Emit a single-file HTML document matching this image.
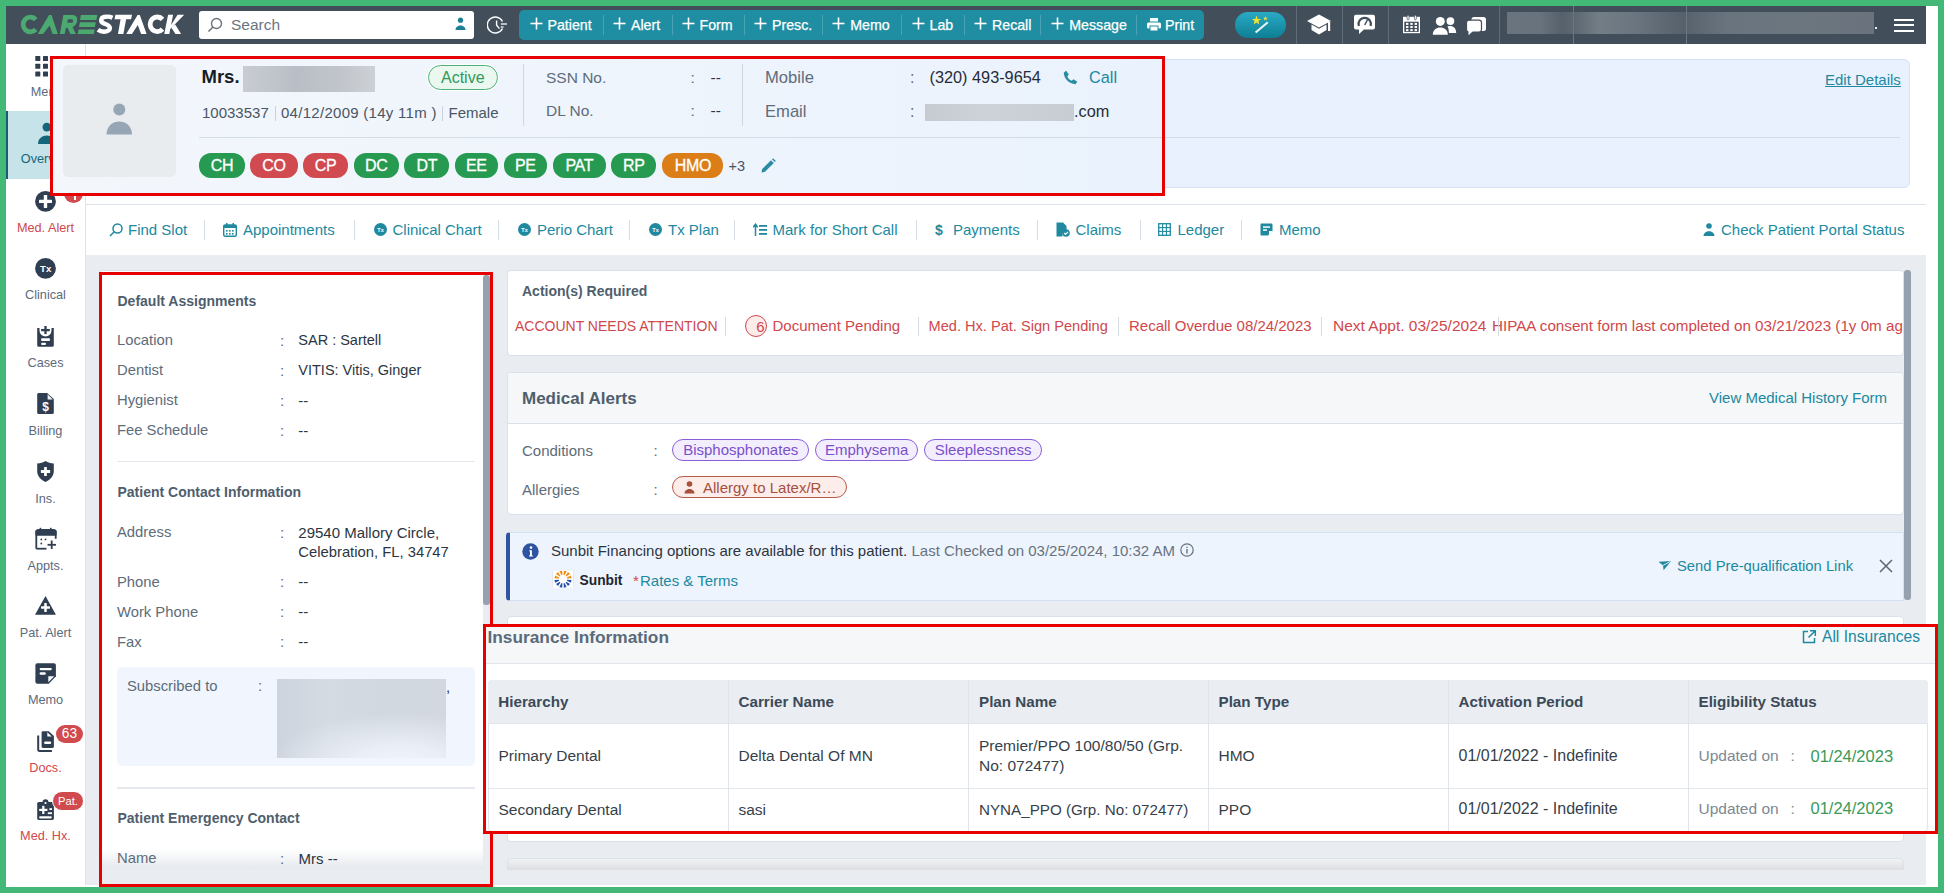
<!DOCTYPE html>
<html><head><meta charset="utf-8"><title>CareStack</title>
<style>
html,body{margin:0;padding:0;width:1944px;height:893px;overflow:hidden;background:#44b876}
body{position:relative;font-family:"Liberation Sans", sans-serif}
.a{position:absolute}
.t{position:absolute;line-height:1;white-space:nowrap}
svg{display:block}
</style></head><body>
<div class="a" style="left:6px;top:6px;width:1932px;height:881px;background:#fff"></div>
<div class="a" style="left:86px;top:255px;width:1840px;height:630px;background:#e9edf1"></div>
<div class="a" style="left:6px;top:6px;width:1920px;height:38px;background:#434e5b"></div>
<svg class="a" style="left:15px;top:10px;" width="175" height="28" viewBox="15 10 175 28">
<path d="M35.7,19.6 A7.2,7.3 0 1 0 35.7,29.4" fill="none" stroke="#4caa70" stroke-width="4.8"/>
<polygon fill="#4caa70" points="37.8,34 49,15 51.5,15 57.9,34 52.6,34 49.6,25.6 43,34"/>
<path fill="#4caa70" fill-rule="evenodd" d="M59.8,34 L63.4,15 L72.5,15 C76.5,15 77.8,18 77,21.5 C76.4,24.5 74.8,26.3 72.5,27 L75.8,34 L70.4,34 L67.5,27.8 L65.9,27.8 L64.6,34 Z M67.9,19.2 L67.2,22.8 L71.3,22.8 C72.6,22.8 73.1,21.8 73.1,20.9 C73.1,19.9 72.5,19.2 71.5,19.2 Z"/>
<polygon fill="#4caa70" points="80,19.9 80.9,15 97.3,15 96.4,19.9"/>
<polygon fill="#4caa70" points="79,26.9 79.9,22.2 95.8,22.2 94.9,26.9"/>
<polygon fill="#4caa70" points="77.7,34 78.6,29.4 94.6,29.4 93.7,34"/>
<path d="M112.5,17.8 C110,16.6 106,16.6 104,17 C100.8,17.8 100.3,21.5 103,23 C105.5,24.3 109.3,24.8 109.8,27.5 C110.3,30.5 107,31.7 104,31.7 C101.5,31.7 99.5,31 98,29.8" fill="none" stroke="#fff" stroke-width="4.4"/>
<polygon fill="#fff" points="114.5,19.2 115.4,14.7 132,14.7 131.1,19.2"/>
<polygon fill="#fff" points="120.6,19 126.2,19 123.4,33.9 118,33.9"/>
<polygon fill="#fff" points="126.2,33.9 137.6,15 139.8,15 146.6,33.9 141.1,33.9 137.8,25.1 131.9,33.9"/>
<path d="M162.5,19.4 A7.1,7.3 0 1 0 162.5,29.2" fill="none" stroke="#fff" stroke-width="4.8"/>
<polygon fill="#fff" points="164.3,33.9 168.1,14.7 173.1,14.7 169.3,33.9"/>
<polygon fill="#fff" points="169.5,27.5 177.6,14.7 184.2,14.7 175,24.2 170.5,28.8"/>
<polygon fill="#fff" points="171.2,27.5 175.2,24.5 181.1,33.9 175.5,33.9"/>
</svg>
<div class="a" style="left:199px;top:11px;width:275px;height:28px;background:#fff;border-radius:3px"></div>
<svg class="a" style="left:207px;top:17px;" width="16" height="16" viewBox="0 0 16 16"><circle cx="9.5" cy="6.5" r="5" fill="none" stroke="#6c757d" stroke-width="1.4"/><line x1="6" y1="10" x2="1.5" y2="14.5" stroke="#6c757d" stroke-width="1.6"/></svg>
<div class="t" style="left:231.0px;top:16.9px;font-size:15.5px;color:#6c757d;font-weight:400;">Search</div>
<svg class="a" style="left:455px;top:17px;" width="11" height="13" viewBox="0 0 11 13"><circle cx="5.5" cy="3.2" r="2.6" fill="#1e7f94"/><path d="M0.5,13 C0.5,7 10.5,7 10.5,13 Z" fill="#1e7f94"/></svg>
<svg class="a" style="left:486.5px;top:15px;" width="20" height="20" viewBox="0 0 20 20"><path d="M15.5,6.5 A8,8 0 1 0 15.5,13.5" fill="none" stroke="#fff" stroke-width="1.4"/><path d="M9.6,5.5 V10.3 L12.5,13.6" fill="none" stroke="#fff" stroke-width="1.4"/><line x1="13.8" y1="9" x2="20" y2="9" stroke="#fff" stroke-width="1.3"/><line x1="13.8" y1="12" x2="16.5" y2="12" stroke="#fff" stroke-width="1.3"/></svg>
<div class="a" style="left:519px;top:10px;width:685px;height:30px;background:#1f8ea2;border-radius:5px"></div>
<svg class="a" style="left:529px;top:17px;left:529.8px" width="13" height="13" viewBox="0 0 13 13"><line x1="6.5" y1="0.5" x2="6.5" y2="12.5" stroke="#fff" stroke-width="1.6"/><line x1="0.5" y1="6.5" x2="12.5" y2="6.5" stroke="#fff" stroke-width="1.6"/></svg>
<div class="t" style="left:547.5px;top:17.8px;font-size:14.2px;color:#fff;font-weight:400;-webkit-text-stroke:0.25px #fff">Patient</div>
<svg class="a" style="left:613px;top:17px;left:613.0px" width="13" height="13" viewBox="0 0 13 13"><line x1="6.5" y1="0.5" x2="6.5" y2="12.5" stroke="#fff" stroke-width="1.6"/><line x1="0.5" y1="6.5" x2="12.5" y2="6.5" stroke="#fff" stroke-width="1.6"/></svg>
<div class="t" style="left:631.0px;top:17.8px;font-size:14.2px;color:#fff;font-weight:400;-webkit-text-stroke:0.25px #fff">Alert</div>
<svg class="a" style="left:682px;top:17px;left:682.0px" width="13" height="13" viewBox="0 0 13 13"><line x1="6.5" y1="0.5" x2="6.5" y2="12.5" stroke="#fff" stroke-width="1.6"/><line x1="0.5" y1="6.5" x2="12.5" y2="6.5" stroke="#fff" stroke-width="1.6"/></svg>
<div class="t" style="left:699.5px;top:17.8px;font-size:14.2px;color:#fff;font-weight:400;-webkit-text-stroke:0.25px #fff">Form</div>
<svg class="a" style="left:754px;top:17px;left:754.0px" width="13" height="13" viewBox="0 0 13 13"><line x1="6.5" y1="0.5" x2="6.5" y2="12.5" stroke="#fff" stroke-width="1.6"/><line x1="0.5" y1="6.5" x2="12.5" y2="6.5" stroke="#fff" stroke-width="1.6"/></svg>
<div class="t" style="left:772.0px;top:17.8px;font-size:14.2px;color:#fff;font-weight:400;-webkit-text-stroke:0.25px #fff">Presc.</div>
<svg class="a" style="left:832px;top:17px;left:832.0px" width="13" height="13" viewBox="0 0 13 13"><line x1="6.5" y1="0.5" x2="6.5" y2="12.5" stroke="#fff" stroke-width="1.6"/><line x1="0.5" y1="6.5" x2="12.5" y2="6.5" stroke="#fff" stroke-width="1.6"/></svg>
<div class="t" style="left:850.3px;top:17.8px;font-size:14.2px;color:#fff;font-weight:400;-webkit-text-stroke:0.25px #fff">Memo</div>
<svg class="a" style="left:911px;top:17px;left:911.5px" width="13" height="13" viewBox="0 0 13 13"><line x1="6.5" y1="0.5" x2="6.5" y2="12.5" stroke="#fff" stroke-width="1.6"/><line x1="0.5" y1="6.5" x2="12.5" y2="6.5" stroke="#fff" stroke-width="1.6"/></svg>
<div class="t" style="left:929.5px;top:17.8px;font-size:14.2px;color:#fff;font-weight:400;-webkit-text-stroke:0.25px #fff">Lab</div>
<svg class="a" style="left:974px;top:17px;left:974.0px" width="13" height="13" viewBox="0 0 13 13"><line x1="6.5" y1="0.5" x2="6.5" y2="12.5" stroke="#fff" stroke-width="1.6"/><line x1="0.5" y1="6.5" x2="12.5" y2="6.5" stroke="#fff" stroke-width="1.6"/></svg>
<div class="t" style="left:992.0px;top:17.8px;font-size:14.2px;color:#fff;font-weight:400;-webkit-text-stroke:0.25px #fff">Recall</div>
<svg class="a" style="left:1051px;top:17px;left:1051.3px" width="13" height="13" viewBox="0 0 13 13"><line x1="6.5" y1="0.5" x2="6.5" y2="12.5" stroke="#fff" stroke-width="1.6"/><line x1="0.5" y1="6.5" x2="12.5" y2="6.5" stroke="#fff" stroke-width="1.6"/></svg>
<div class="t" style="left:1069.3px;top:17.8px;font-size:14.2px;color:#fff;font-weight:400;-webkit-text-stroke:0.25px #fff">Message</div>
<div class="a" style="left:602.7px;top:15px;width:1px;height:20px;background:#4aa3b4"></div>
<div class="a" style="left:671.6px;top:15px;width:1px;height:20px;background:#4aa3b4"></div>
<div class="a" style="left:743.7px;top:15px;width:1px;height:20px;background:#4aa3b4"></div>
<div class="a" style="left:822.0px;top:15px;width:1px;height:20px;background:#4aa3b4"></div>
<div class="a" style="left:900.7px;top:15px;width:1px;height:20px;background:#4aa3b4"></div>
<div class="a" style="left:963.5px;top:15px;width:1px;height:20px;background:#4aa3b4"></div>
<div class="a" style="left:1040.2px;top:15px;width:1px;height:20px;background:#4aa3b4"></div>
<div class="a" style="left:1136.4px;top:15px;width:1px;height:20px;background:#4aa3b4"></div>
<svg class="a" style="left:1146.5px;top:18px;" width="14" height="13" viewBox="0 0 14 13"><rect x="3" y="0" width="8" height="3.5" fill="#fff"/><rect x="0" y="4.5" width="14" height="6" rx="1.5" fill="#fff"/><rect x="3" y="8" width="8" height="5" fill="#fff" stroke="#1f8ea2" stroke-width="1"/></svg>
<div class="t" style="left:1165.0px;top:17.8px;font-size:14.2px;color:#fff;font-weight:400;-webkit-text-stroke:0.25px #fff">Print</div>
<div class="a" style="left:1235px;top:12px;width:51px;height:25.6px;border-radius:13px;background:linear-gradient(#2aaac4,#0d7f95)"></div>
<svg class="a" style="left:1252px;top:14px;" width="20" height="20" viewBox="0 0 20 20"><polygon fill="#f6e22c" points="4.5,1.5 5.7,4.9 9.2,4.9 6.4,7 7.4,10.5 4.5,8.4 1.6,10.5 2.6,7 -0.2,4.9 3.3,4.9"/><polygon fill="#f6e22c" points="13.4,2 14,3.7 15.8,3.7 14.4,4.8 14.9,6.5 13.4,5.5 11.9,6.5 12.4,4.8 11,3.7 12.8,3.7"/><line x1="3.6" y1="18.6" x2="15.8" y2="8.2" stroke="#e8f4f6" stroke-width="2"/></svg>
<div class="a" style="left:1296.0px;top:6px;width:1px;height:38px;background:#5f6c79"></div>
<div class="a" style="left:1342.0px;top:6px;width:1px;height:38px;background:#5f6c79"></div>
<div class="a" style="left:1388.0px;top:6px;width:1px;height:38px;background:#5f6c79"></div>
<div class="a" style="left:1499.0px;top:6px;width:1px;height:38px;background:#5f6c79"></div>
<svg class="a" style="left:1307px;top:14px;" width="25" height="21" viewBox="0 0 25 21"><polygon fill="#fff" points="12,0.5 24,7 12,13.5 0,7"/><path d="M4.5,10.5 V16 L12,20.5 L19.5,16 V10.5 L12,14.8 Z" fill="#fff"/><rect x="21" y="8" width="2.2" height="9" fill="#fff"/></svg>
<svg class="a" style="left:1354px;top:14px;" width="22" height="21" viewBox="0 0 22 21"><path d="M2,0.7 H19 a2,2 0 0 1 2,2 V13.5 a2,2 0 0 1 -2,2 H10 L5,20 V15.5 H2 a2,2 0 0 1 -2,-2 V2.7 a2,2 0 0 1 2,-2 Z" fill="#fff"/><path d="M4.8,12 A6.2,6.2 0 1 1 16.6,12" fill="none" stroke="#434e5b" stroke-width="2.2"/><line x1="10.7" y1="11" x2="13.6" y2="5.5" stroke="#434e5b" stroke-width="1.5"/></svg>
<svg class="a" style="left:1403px;top:15px;" width="17" height="19" viewBox="0 0 17 19"><rect x="0" y="1.8" width="17" height="16.4" fill="#fff"/><rect x="1.3" y="6.7" width="14.4" height="10.2" fill="#434e5b"/><rect x="4.1" y="0.2" width="1.9" height="4.6" rx="0.9" fill="#fff" stroke="#434e5b" stroke-width="0.7"/><rect x="11.4" y="0.2" width="1.9" height="4.6" rx="0.9" fill="#fff" stroke="#434e5b" stroke-width="0.7"/><rect x="3.0" y="7.9" width="2.4" height="2" fill="#fff"/><rect x="3.0" y="11.0" width="2.4" height="2" fill="#fff"/><rect x="3.0" y="14.1" width="2.4" height="2" fill="#fff"/><rect x="7.3" y="7.9" width="2.4" height="2" fill="#fff"/><rect x="7.3" y="11.0" width="2.4" height="2" fill="#fff"/><rect x="7.3" y="14.1" width="2.4" height="2" fill="#fff"/><rect x="11.6" y="7.9" width="2.4" height="2" fill="#fff"/><rect x="11.6" y="11.0" width="2.4" height="2" fill="#fff"/><rect x="11.6" y="14.1" width="2.4" height="2" fill="#fff"/></svg>
<svg class="a" style="left:1432px;top:15px;" width="25" height="21" viewBox="0 0 25 21"><circle cx="8.3" cy="6.4" r="4.5" fill="#fff"/><path d="M0.8,19.7 C0.8,10 15.8,10 15.8,19.7 Z" fill="#fff"/><circle cx="18.4" cy="6.1" r="3.9" fill="#fff"/><path d="M15.5,11.5 C20,10 24.2,12.5 24.2,17.9 H17 C16.8,15 16.5,13 15.5,11.5 Z" fill="#fff"/></svg>
<svg class="a" style="left:1466px;top:16px;" width="21" height="20" viewBox="0 0 21 20"><rect x="5.5" y="1" width="14.5" height="14" rx="2.5" fill="#fff"/><rect x="0.5" y="4.2" width="15" height="11.8" rx="2.5" fill="#fff" stroke="#434e5b" stroke-width="1.2"/><path d="M2.5,15 L2.5,19.2 L7,15 Z" fill="#fff"/></svg>
<div class="a" style="left:1507px;top:12px;width:367px;height:22px;background:linear-gradient(90deg,#6a747e 0%,#69737d 9%,#56616b 15%,#5e6973 19%,#737d86 25%,#6b757f 35%,#5f6a74 42%,#56616b 48%,#5e6973 53%,#6a747e 60%,#6c767f 80%,#6a737d 100%)"></div>
<div class="a" style="left:1875px;top:27px;width:2px;height:2px;background:#e8eef3"></div>
<div class="a" style="left:1573px;top:6px;width:1px;height:38px;background:#6a7783"></div>
<div class="a" style="left:1686px;top:6px;width:1px;height:38px;background:#6a7783"></div>
<div class="a" style="left:1894px;top:18.5px;width:20px;height:2.6px;background:#fff"></div>
<div class="a" style="left:1894px;top:23.5px;width:20px;height:2.6px;background:#fff"></div>
<div class="a" style="left:1894px;top:29.5px;width:20px;height:2.6px;background:#fff"></div>
<div class="a" style="left:85px;top:44px;width:1px;height:841px;background:#dfe4ea"></div>
<div class="a" style="left:6px;top:111px;width:79px;height:68px;background:#c5e3e9"></div>
<div class="a" style="left:6px;top:111px;width:2px;height:68px;background:#145e73"></div>
<svg class="a" style="left:35px;top:55px;" width="22" height="23" viewBox="0 0 22 23"><rect x="0.3" y="1.0" width="5" height="5.1" rx="0.6" fill="#2f3e50"/><rect x="0.3" y="8.7" width="5" height="5.1" rx="0.6" fill="#2f3e50"/><rect x="0.3" y="16.4" width="5" height="5.1" rx="0.6" fill="#2f3e50"/><rect x="8.0" y="1.0" width="5" height="5.1" rx="0.6" fill="#2f3e50"/><rect x="8.0" y="8.7" width="5" height="5.1" rx="0.6" fill="#2f3e50"/><rect x="8.0" y="16.4" width="5" height="5.1" rx="0.6" fill="#2f3e50"/><rect x="15.7" y="1.0" width="5" height="5.1" rx="0.6" fill="#2f3e50"/><rect x="15.7" y="8.7" width="5" height="5.1" rx="0.6" fill="#2f3e50"/><rect x="15.7" y="16.4" width="5" height="5.1" rx="0.6" fill="#2f3e50"/></svg>
<div class="t" style="left:30.8px;top:86.0px;font-size:12.7px;color:#5b6b7d;font-weight:400;">Menu</div>
<svg class="a" style="left:37px;top:122px;" width="20" height="23" viewBox="0 0 20 23"><circle cx="9.8" cy="5.1" r="4.3" fill="#15667b"/><path d="M1,22 C1,10.5 18.6,10.5 18.6,22 Z" fill="#15667b"/></svg>
<div class="t" style="left:20.8px;top:153.2px;font-size:12.7px;color:#15667b;font-weight:400;">Overview</div>
<div class="a" style="left:64px;top:184px;width:19px;height:19px;border-radius:10px;background:#d04a4e"></div>
<div class="a" style="left:74px;top:196px;width:2px;height:3.5px;background:#fff"></div>
<svg class="a" style="left:35px;top:191px;" width="21" height="21" viewBox="0 0 21 21"><circle cx="10.5" cy="10.4" r="10.4" fill="#2f3e50"/><rect x="8.8" y="3.9" width="3.4" height="13" rx="0.6" fill="#fff"/><rect x="4" y="8.7" width="13" height="3.4" rx="0.6" fill="#fff"/></svg>
<div class="t" style="left:6px;width:79px;text-align:center;top:222.0px;font-size:12.7px;color:#d0474c">Med. Alert</div>
<svg class="a" style="left:35px;top:258px;" width="21" height="21" viewBox="0 0 21 21"><circle cx="10.5" cy="10.4" r="10.4" fill="#2f3e50"/><text x="10.7" y="13.7" font-family="Liberation Sans" font-weight="700" font-size="9.6" fill="#fff" text-anchor="middle">Tx</text></svg>
<div class="t" style="left:6px;width:79px;text-align:center;top:289.0px;font-size:12.7px;color:#5b6b7d">Clinical</div>
<svg class="a" style="left:37px;top:325px;" width="17" height="22" viewBox="0 0 17 22"><path d="M0.2,2.9 H2.5 V5.5 A6,6 0 0 0 14.5,5.5 V2.9 H16.8 V20.2 Q16.8,21.7 15.3,21.7 H1.7 Q0.2,21.7 0.2,20.2 Z" fill="#2f3e50"/><rect x="7.35" y="1" width="2.3" height="8.1" fill="#2f3e50"/><rect x="4.1" y="3.95" width="8.7" height="2.3" fill="#2f3e50"/><rect x="4.1" y="13.3" width="8.9" height="2.7" rx="1" fill="#fff"/><rect x="4.1" y="17.8" width="4.9" height="2.2" rx="1" fill="#fff"/></svg>
<div class="t" style="left:6px;width:79px;text-align:center;top:357.0px;font-size:12.7px;color:#5b6b7d">Cases</div>
<svg class="a" style="left:37px;top:392px;" width="17" height="23" viewBox="0 0 17 23"><path d="M1.5,1 H10.1 L16.8,7.1 V20.4 Q16.8,21.9 15.3,21.9 H1.7 Q0.2,21.9 0.2,20.4 V2.5 Q0.2,1 1.5,1 Z" fill="#2f3e50"/><path d="M10.6,2.3 V7.4 H15.8 Z" fill="#eef0f3"/><text x="8.6" y="18.6" font-family="Liberation Sans" font-weight="700" font-size="12" fill="#fff" text-anchor="middle">$</text></svg>
<div class="t" style="left:6px;width:79px;text-align:center;top:425.0px;font-size:12.7px;color:#5b6b7d">Billing</div>
<svg class="a" style="left:37px;top:460px;" width="17" height="23" viewBox="0 0 17 23"><path d="M8.5,1 C11,2.6 13.5,3.2 16.8,3.6 V11 C16.8,16 13.5,19.8 8.5,21.9 C3.5,19.8 0.2,16 0.2,11 V3.6 C3.5,3.2 6,2.6 8.5,1 Z" fill="#2f3e50"/><rect x="7.1" y="6.9" width="2.8" height="9.2" rx="0.5" fill="#fff"/><rect x="3.9" y="10.1" width="9.2" height="2.8" rx="0.5" fill="#fff"/></svg>
<div class="t" style="left:6px;width:79px;text-align:center;top:492.5px;font-size:12.7px;color:#5b6b7d">Ins.</div>
<svg class="a" style="left:35px;top:527px;" width="22" height="23" viewBox="0 0 22 23"><path d="M1.3,21.7 V5.2 Q1.3,3 3.5,3 H18.5 Q20.7,3 20.7,5.2 V11.8" fill="none" stroke="#2f3e50" stroke-width="1.8"/><path d="M1.3,21.7 H11.5" fill="none" stroke="#2f3e50" stroke-width="1.8"/><rect x="0.4" y="3" width="21.2" height="5.8" rx="1.5" fill="#2f3e50"/><rect x="4.6" y="0.8" width="1.6" height="3" fill="#2f3e50"/><rect x="15" y="0.8" width="1.6" height="3" fill="#2f3e50"/><circle cx="6.3" cy="12.4" r="0.9" fill="#2f3e50"/><circle cx="10.5" cy="12.4" r="0.9" fill="#2f3e50"/><circle cx="6.3" cy="16.5" r="0.9" fill="#2f3e50"/><rect x="15.8" y="13.5" width="1.8" height="8.5" fill="#2f3e50"/><rect x="12.5" y="16.9" width="8.5" height="1.8" fill="#2f3e50"/></svg>
<div class="t" style="left:6px;width:79px;text-align:center;top:560.0px;font-size:12.7px;color:#5b6b7d">Appts.</div>
<svg class="a" style="left:35px;top:595px;" width="21" height="21" viewBox="0 0 21 21"><path d="M10.5,1 L20.9,19.7 H0 Z" fill="#2f3e50"/><rect x="9.25" y="8" width="2.5" height="9" rx="0.4" fill="#fff"/><rect x="6" y="11.25" width="9" height="2.5" rx="0.4" fill="#fff"/></svg>
<div class="t" style="left:6px;width:79px;text-align:center;top:627.0px;font-size:12.7px;color:#5b6b7d">Pat. Alert</div>
<svg class="a" style="left:35px;top:662px;" width="21" height="22" viewBox="0 0 21 22"><path d="M2.4,1.2 H18.9 Q20.9,1.2 20.9,3.2 V14.3 L13.8,21.7 H2.4 Q0.4,21.7 0.4,19.7 V3.2 Q0.4,1.2 2.4,1.2 Z" fill="#2f3e50"/><rect x="4.6" y="5.9" width="12.2" height="2.3" rx="1.1" fill="#fff"/><rect x="4.6" y="10.3" width="6.2" height="2.5" rx="1.2" fill="#fff"/><path d="M13.3,14.2 H19.2 L13.3,20.3 Z" fill="#fff"/></svg>
<div class="t" style="left:6px;width:79px;text-align:center;top:694.0px;font-size:12.7px;color:#5b6b7d">Memo</div>
<svg class="a" style="left:36px;top:729px;" width="19" height="24" viewBox="0 0 19 24"><path d="M2.2,6.5 V20.5 Q2.2,22 3.7,22 H15.9" fill="none" stroke="#2f3e50" stroke-width="2"/><path d="M6.9,2.2 H12.8 L17.9,7.1 V17.5 Q17.9,18.9 16.5,18.9 H6.9 Q5.6,18.9 5.6,17.5 V3.5 Q5.6,2.2 6.9,2.2 Z" fill="#2f3e50"/><path d="M11.3,3.3 V7.5 H15.8 Z" fill="#fff"/><rect x="8.1" y="12.4" width="7.1" height="2.5" rx="1.2" fill="#fff"/></svg>
<div class="a" style="left:56px;top:725px;width:27px;height:18px;border-radius:9px;background:#d04a4e;color:#fff;font-size:13.8px;line-height:18.5px;text-align:center">63</div>
<div class="t" style="left:6px;width:79px;text-align:center;top:762.0px;font-size:12.7px;color:#d0474c">Docs.</div>
<svg class="a" style="left:37px;top:798px;" width="17" height="23" viewBox="0 0 17 23"><rect x="0.2" y="3.9" width="16.7" height="18" rx="1.6" fill="#2f3e50"/><circle cx="8.5" cy="4.3" r="3" fill="#2f3e50"/><circle cx="8.5" cy="5" r="1.1" fill="#fff"/><rect x="5.2" y="7.8" width="2.2" height="8.2" fill="#fff"/><rect x="2.2" y="10.8" width="8.2" height="2.2" fill="#fff"/><rect x="12.4" y="10.2" width="2.6" height="1.8" fill="#fff"/><rect x="10.8" y="14.3" width="4.2" height="1.8" fill="#fff"/><rect x="2.2" y="18.2" width="12.5" height="2.4" rx="0.8" fill="#fff"/></svg>
<div class="a" style="left:52px;top:791px;width:32px;height:20px;border-radius:10px;background:#d04a4e;border:1.2px solid #fff;box-sizing:border-box;color:#fff;font-size:11.2px;line-height:18px;text-align:center">Pat.</div>
<div class="t" style="left:6px;width:79px;text-align:center;top:829.5px;font-size:12.7px;color:#d0474c">Med. Hx.</div>
<div class="a" style="left:86px;top:204px;width:1840px;height:1px;background:#dde3ea"></div>
<div class="a" style="left:100px;top:59px;width:1810px;height:129px;background:#e8f1fd;border:1px solid #d3e2f5;border-radius:6px;box-sizing:border-box"></div>
<div class="a" style="left:1165px;top:137px;width:735px;height:1px;background:#d3dbe5"></div>
<div class="t" style="left:1825.0px;top:72.3px;font-size:15px;color:#2089a0;font-weight:400;text-decoration:underline">Edit Details</div>
<div class="a" style="left:53px;top:59px;width:1109px;height:134px;background:linear-gradient(90deg,#f3f7fc,#eef4fc 60%,#eaf2fd)"></div>
<div class="a" style="left:63px;top:65px;width:113px;height:112px;background:#e9ecef;border-radius:5px"></div>
<svg class="a" style="left:106px;top:103px;" width="27" height="32" viewBox="0 0 27 32"><circle cx="13.3" cy="6.5" r="6" fill="#97a6b4"/><path d="M0.5,31.5 C0.5,14 26,14 26,31.5 Z" fill="#97a6b4"/></svg>
<div class="t" style="left:201.5px;top:68.3px;font-size:18.5px;color:#161c26;font-weight:700;">Mrs.</div>
<div class="a" style="left:243px;top:65.5px;width:132px;height:26px;background:linear-gradient(90deg,#c9ccd2,#b9bec6 40%,#c0c4ca 70%,#cdd1d6)"></div>
<div class="a" style="left:427.5px;top:65px;width:70.5px;height:25px;box-sizing:border-box;border:1.7px solid #4fb077;border-radius:12.5px;background:#eaf8ef;box-shadow:0 0 0 1px #fff"></div>
<div class="t" style="left:441.0px;top:69.5px;font-size:16px;color:#2f9a5c;font-weight:400;">Active</div>
<div class="t" style="left:202.0px;top:105.2px;font-size:15px;color:#4a5563;font-weight:400;">10033537</div>
<div class="a" style="left:275px;top:106px;width:1px;height:15px;background:#c9d1da"></div>
<div class="t" style="left:281.0px;top:105.2px;font-size:15px;color:#4a5563;font-weight:400;letter-spacing:0.28px">04/12/2009 (14y 11m )</div>
<div class="a" style="left:442px;top:106px;width:1px;height:15px;background:#c9d1da"></div>
<div class="t" style="left:448.5px;top:105.2px;font-size:15px;color:#4a5563;font-weight:400;">Female</div>
<div class="a" style="left:523px;top:64px;width:1px;height:62px;background:#cfd8e2"></div>
<div class="a" style="left:742px;top:64px;width:1px;height:62px;background:#cfd8e2"></div>
<div class="a" style="left:199px;top:137px;width:963px;height:1px;background:#d3dbe5"></div>
<div class="t" style="left:546.0px;top:69.9px;font-size:15.5px;color:#5e6c7a;font-weight:400;">SSN No.</div>
<div class="t" style="left:690.5px;top:69.9px;font-size:15.5px;color:#5e6c7a;font-weight:400;">:</div>
<div class="t" style="left:710.5px;top:69.9px;font-size:15.5px;color:#2c3540;font-weight:400;">--</div>
<div class="t" style="left:546.0px;top:103.4px;font-size:15.5px;color:#5e6c7a;font-weight:400;">DL No.</div>
<div class="t" style="left:690.5px;top:103.4px;font-size:15.5px;color:#5e6c7a;font-weight:400;">:</div>
<div class="t" style="left:710.5px;top:103.4px;font-size:15.5px;color:#2c3540;font-weight:400;">--</div>
<div class="t" style="left:765.0px;top:69.7px;font-size:16.6px;color:#5e6c7a;font-weight:400;">Mobile</div>
<div class="t" style="left:910.0px;top:70.3px;font-size:16px;color:#5e6c7a;font-weight:400;">:</div>
<div class="t" style="left:929.5px;top:69.2px;font-size:16.3px;color:#262d38;font-weight:400;">(320) 493-9654</div>
<svg class="a" style="left:1063px;top:70px;" width="15" height="15" viewBox="0 0 15 15"><path d="M3.2,0.8 L5.8,4.6 L4.3,6.4 C5.3,8.6 6.6,9.8 8.7,10.8 L10.5,9.2 L14.3,11.8 L12.5,14.2 C6,14 0.9,8.8 0.8,2.6 Z" fill="#2a8ba1"/></svg>
<div class="t" style="left:1089.0px;top:69.2px;font-size:16.3px;color:#2089a0;font-weight:400;">Call</div>
<div class="t" style="left:765.0px;top:103.5px;font-size:16.6px;color:#5e6c7a;font-weight:400;">Email</div>
<div class="t" style="left:910.0px;top:104.1px;font-size:16px;color:#5e6c7a;font-weight:400;">:</div>
<div class="a" style="left:925px;top:104px;width:149px;height:17px;background:linear-gradient(90deg,#c6cbd2,#cdd2d8 40%,#c8cdd4)"></div>
<div class="t" style="left:1074.0px;top:103.2px;font-size:16.3px;color:#262d38;font-weight:400;">.com</div>
<div class="a" style="left:199.0px;top:153px;width:46.0px;height:24.5px;border-radius:12px;background:#279a52;color:#fff;font-size:16px;line-height:25.4px;letter-spacing:-0.3px;-webkit-text-stroke:0.3px #fff;text-align:center">CH</div>
<div class="a" style="left:250.4px;top:153px;width:47.3px;height:24.5px;border-radius:12px;background:#d04a4f;color:#fff;font-size:16px;line-height:25.4px;letter-spacing:-0.3px;-webkit-text-stroke:0.3px #fff;text-align:center">CO</div>
<div class="a" style="left:303.0px;top:153px;width:45.0px;height:24.5px;border-radius:12px;background:#d04a4f;color:#fff;font-size:16px;line-height:25.4px;letter-spacing:-0.3px;-webkit-text-stroke:0.3px #fff;text-align:center">CP</div>
<div class="a" style="left:353.8px;top:153px;width:45.0px;height:24.5px;border-radius:12px;background:#279a52;color:#fff;font-size:16px;line-height:25.4px;letter-spacing:-0.3px;-webkit-text-stroke:0.3px #fff;text-align:center">DC</div>
<div class="a" style="left:404.4px;top:153px;width:45.1px;height:24.5px;border-radius:12px;background:#279a52;color:#fff;font-size:16px;line-height:25.4px;letter-spacing:-0.3px;-webkit-text-stroke:0.3px #fff;text-align:center">DT</div>
<div class="a" style="left:454.9px;top:153px;width:42.9px;height:24.5px;border-radius:12px;background:#279a52;color:#fff;font-size:16px;line-height:25.4px;letter-spacing:-0.3px;-webkit-text-stroke:0.3px #fff;text-align:center">EE</div>
<div class="a" style="left:503.7px;top:153px;width:43.3px;height:24.5px;border-radius:12px;background:#279a52;color:#fff;font-size:16px;line-height:25.4px;letter-spacing:-0.3px;-webkit-text-stroke:0.3px #fff;text-align:center">PE</div>
<div class="a" style="left:553.0px;top:153px;width:52.7px;height:24.5px;border-radius:12px;background:#279a52;color:#fff;font-size:16px;line-height:25.4px;letter-spacing:-0.3px;-webkit-text-stroke:0.3px #fff;text-align:center">PAT</div>
<div class="a" style="left:611.4px;top:153px;width:45.0px;height:24.5px;border-radius:12px;background:#279a52;color:#fff;font-size:16px;line-height:25.4px;letter-spacing:-0.3px;-webkit-text-stroke:0.3px #fff;text-align:center">RP</div>
<div class="a" style="left:662.3px;top:153px;width:61.2px;height:24.5px;border-radius:12px;background:#dc7e17;color:#fff;font-size:16px;line-height:25.4px;letter-spacing:-0.3px;-webkit-text-stroke:0.3px #fff;text-align:center">HMO</div>
<div class="t" style="left:728.5px;top:159.2px;font-size:14.5px;color:#4a5563;font-weight:400;">+3</div>
<svg class="a" style="left:760px;top:158px;" width="16" height="16" viewBox="0 0 16 16"><path d="M1.5,14.5 L2.2,11 L11,2.2 L13.8,5 L5,13.8 Z" fill="#2a8ba1"/><path d="M12,1.2 L13,0.2 L15.8,3 L14.8,4 Z" fill="#2a8ba1"/></svg>
<svg class="a" style="left:109px;top:223px;" width="14" height="14" viewBox="0 0 14 14"><circle cx="8.5" cy="5.5" r="4.5" fill="none" stroke="#2089a0" stroke-width="1.5"/><line x1="5.3" y1="8.7" x2="1" y2="13" stroke="#2089a0" stroke-width="1.6"/></svg>
<div class="t" style="left:128.0px;top:221.9px;font-size:15px;color:#2089a0;font-weight:400;">Find Slot</div>
<div class="a" style="left:204.0px;top:220px;width:1px;height:20px;background:#d6dde5"></div>
<svg class="a" style="left:223px;top:223px;" width="14" height="14" viewBox="0 0 14 14"><rect x="0.7" y="2" width="12.6" height="11.3" rx="1.5" fill="none" stroke="#2089a0" stroke-width="1.4"/><rect x="0.7" y="2" width="12.6" height="3" fill="#2089a0"/><rect x="3" y="0" width="1.5" height="3" fill="#2089a0"/><rect x="9.5" y="0" width="1.5" height="3" fill="#2089a0"/><rect x="3.0" y="7.0" width="1.6" height="1.6" fill="#2089a0"/><rect x="3.0" y="10.0" width="1.6" height="1.6" fill="#2089a0"/><rect x="6.0" y="7.0" width="1.6" height="1.6" fill="#2089a0"/><rect x="6.0" y="10.0" width="1.6" height="1.6" fill="#2089a0"/><rect x="9.0" y="7.0" width="1.6" height="1.6" fill="#2089a0"/><rect x="9.0" y="10.0" width="1.6" height="1.6" fill="#2089a0"/></svg>
<div class="t" style="left:243.0px;top:221.9px;font-size:15px;color:#2089a0;font-weight:400;">Appointments</div>
<div class="a" style="left:354.0px;top:220px;width:1px;height:20px;background:#d6dde5"></div>
<svg class="a" style="left:373.5px;top:223px;" width="13" height="13" viewBox="0 0 13 13"><circle cx="6.5" cy="6.5" r="6.5" fill="#2089a0"/><text x="6.5" y="8.6" font-family="Liberation Sans" font-weight="700" font-size="5.5" fill="#fff" text-anchor="middle">Tx</text></svg>
<div class="t" style="left:392.5px;top:221.9px;font-size:15px;color:#2089a0;font-weight:400;">Clinical Chart</div>
<div class="a" style="left:498.0px;top:220px;width:1px;height:20px;background:#d6dde5"></div>
<svg class="a" style="left:518px;top:223px;" width="13" height="13" viewBox="0 0 13 13"><circle cx="6.5" cy="6.5" r="6.5" fill="#2089a0"/><text x="6.5" y="8.6" font-family="Liberation Sans" font-weight="700" font-size="5.5" fill="#fff" text-anchor="middle">Tx</text></svg>
<div class="t" style="left:537.0px;top:221.9px;font-size:15px;color:#2089a0;font-weight:400;">Perio Chart</div>
<div class="a" style="left:629.0px;top:220px;width:1px;height:20px;background:#d6dde5"></div>
<svg class="a" style="left:649px;top:223px;" width="13" height="13" viewBox="0 0 13 13"><circle cx="6.5" cy="6.5" r="6.5" fill="#2089a0"/><text x="6.5" y="8.6" font-family="Liberation Sans" font-weight="700" font-size="5.5" fill="#fff" text-anchor="middle">Tx</text></svg>
<div class="t" style="left:668.0px;top:221.9px;font-size:15px;color:#2089a0;font-weight:400;">Tx Plan</div>
<div class="a" style="left:734.0px;top:220px;width:1px;height:20px;background:#d6dde5"></div>
<svg class="a" style="left:753px;top:223px;" width="14" height="13" viewBox="0 0 14 13"><path d="M2.5,13 V2 M0.3,4.2 L2.5,1.2 L4.7,4.2" fill="none" stroke="#2089a0" stroke-width="1.5"/><rect x="6" y="2" width="8" height="1.8" fill="#2089a0"/><rect x="6" y="6" width="8" height="1.8" fill="#2089a0"/><rect x="6" y="10" width="8" height="1.8" fill="#2089a0"/></svg>
<div class="t" style="left:772.5px;top:221.9px;font-size:15px;color:#2089a0;font-weight:400;">Mark for Short Call</div>
<div class="a" style="left:915.5px;top:220px;width:1px;height:20px;background:#d6dde5"></div>
<div class="t" style="left:935.0px;top:222.7px;font-size:14px;color:#2089a0;font-weight:700;">$</div>
<div class="t" style="left:953.0px;top:221.9px;font-size:15px;color:#2089a0;font-weight:400;">Payments</div>
<div class="a" style="left:1037.0px;top:220px;width:1px;height:20px;background:#d6dde5"></div>
<svg class="a" style="left:1056px;top:222px;" width="14" height="15" viewBox="0 0 14 15"><path d="M0.5,0.5 H7 L10.5,4 V8 A5,5 0 0 0 6.5,14.5 H0.5 Z" fill="#2089a0"/><circle cx="10" cy="11" r="3.8" fill="#2089a0"/><path d="M8.2,11 L9.6,12.4 L12,9.8" fill="none" stroke="#fff" stroke-width="1.2"/></svg>
<div class="t" style="left:1075.5px;top:221.9px;font-size:15px;color:#2089a0;font-weight:400;">Claims</div>
<div class="a" style="left:1139.5px;top:220px;width:1px;height:20px;background:#d6dde5"></div>
<svg class="a" style="left:1158px;top:223px;" width="13" height="13" viewBox="0 0 13 13"><rect x="0.7" y="0.7" width="11.6" height="11.6" fill="none" stroke="#2089a0" stroke-width="1.3"/><line x1="4.6" y1="0.7" x2="4.6" y2="12.3" stroke="#2089a0" stroke-width="1.1"/><line x1="8.4" y1="0.7" x2="8.4" y2="12.3" stroke="#2089a0" stroke-width="1.1"/><line x1="0.7" y1="4.6" x2="12.3" y2="4.6" stroke="#2089a0" stroke-width="1.1"/><line x1="0.7" y1="8.4" x2="12.3" y2="8.4" stroke="#2089a0" stroke-width="1.1"/></svg>
<div class="t" style="left:1177.5px;top:221.9px;font-size:15px;color:#2089a0;font-weight:400;">Ledger</div>
<div class="a" style="left:1240.5px;top:220px;width:1px;height:20px;background:#d6dde5"></div>
<svg class="a" style="left:1260px;top:223px;" width="13" height="13" viewBox="0 0 13 13"><path d="M1.5,0.5 H11.5 a1,1 0 0 1 1,1 V8 L8,12.5 H1.5 a1,1 0 0 1 -1,-1 V1.5 a1,1 0 0 1 1,-1 Z" fill="#2089a0"/><rect x="3" y="3.3" width="7" height="1.5" fill="#fff"/><rect x="3" y="6.3" width="4" height="1.5" fill="#fff"/><path d="M12.5,8 H9 V12.5 Z" fill="#fff"/></svg>
<div class="t" style="left:1279.0px;top:221.9px;font-size:15px;color:#2089a0;font-weight:400;">Memo</div>
<svg class="a" style="left:1703px;top:223px;" width="12" height="13" viewBox="0 0 12 13"><circle cx="6" cy="3" r="2.8" fill="#2089a0"/><path d="M0.5,13 C0.5,6.5 11.5,6.5 11.5,13 Z" fill="#2089a0"/></svg>
<div class="t" style="left:1721.0px;top:221.9px;font-size:15px;color:#2089a0;font-weight:400;">Check Patient Portal Status</div>
<div class="a" style="left:100px;top:270px;width:390px;height:599px;background:#fff;border-radius:4px;border-top:1px solid #dde3ea;box-sizing:border-box"></div>
<div class="a" style="left:101px;top:849px;width:382px;height:20px;background:linear-gradient(rgba(255,255,255,0),rgba(226,230,235,.9))"></div>
<div class="a" style="left:483px;top:600px;width:7px;height:269px;background:#e9edf1"></div>
<div class="a" style="left:483px;top:275px;width:7px;height:330px;background:#95a1ae;border-radius:3px"></div>
<div class="t" style="left:117.5px;top:293.7px;font-size:14px;color:#4f5e6d;font-weight:700;">Default Assignments</div>
<div class="t" style="left:117.0px;top:333.2px;font-size:14.8px;color:#5e6c7a;font-weight:400;">Location</div>
<div class="t" style="left:280.0px;top:333.0px;font-size:15px;color:#5e6c7a;font-weight:400;">:</div>
<div class="t" style="left:298.3px;top:333.4px;font-size:14.5px;color:#2c3540;font-weight:400;">SAR : Sartell</div>
<div class="t" style="left:117.0px;top:363.0px;font-size:14.8px;color:#5e6c7a;font-weight:400;">Dentist</div>
<div class="t" style="left:280.0px;top:362.8px;font-size:15px;color:#5e6c7a;font-weight:400;">:</div>
<div class="t" style="left:298.3px;top:363.2px;font-size:14.5px;color:#2c3540;font-weight:400;">VITIS: Vitis, Ginger</div>
<div class="t" style="left:117.0px;top:392.8px;font-size:14.8px;color:#5e6c7a;font-weight:400;">Hygienist</div>
<div class="t" style="left:280.0px;top:392.6px;font-size:15px;color:#5e6c7a;font-weight:400;">:</div>
<div class="t" style="left:298.3px;top:392.6px;font-size:15px;color:#2c3540;font-weight:400;">--</div>
<div class="t" style="left:117.0px;top:422.8px;font-size:14.8px;color:#5e6c7a;font-weight:400;">Fee Schedule</div>
<div class="t" style="left:280.0px;top:422.6px;font-size:15px;color:#5e6c7a;font-weight:400;">:</div>
<div class="t" style="left:298.3px;top:422.6px;font-size:15px;color:#2c3540;font-weight:400;">--</div>
<div class="a" style="left:117px;top:461px;width:358px;height:1px;background:#e3e8ee"></div>
<div class="t" style="left:117.5px;top:484.9px;font-size:14px;color:#4f5e6d;font-weight:700;">Patient Contact Information</div>
<div class="t" style="left:117.0px;top:524.8px;font-size:14.8px;color:#5e6c7a;font-weight:400;">Address</div>
<div class="t" style="left:280.0px;top:524.6px;font-size:15px;color:#5e6c7a;font-weight:400;">:</div>
<div class="t" style="left:298.3px;top:524.6px;font-size:15px;color:#2c3540;font-weight:400;">29540 Mallory Circle,</div>
<div class="t" style="left:298.3px;top:545.0px;font-size:14.8px;color:#2c3540;font-weight:400;">Celebration, FL, 34747</div>
<div class="t" style="left:117.0px;top:574.6px;font-size:14.8px;color:#5e6c7a;font-weight:400;">Phone</div>
<div class="t" style="left:280.0px;top:574.4px;font-size:15px;color:#5e6c7a;font-weight:400;">:</div>
<div class="t" style="left:298.3px;top:574.4px;font-size:15px;color:#2c3540;font-weight:400;">--</div>
<div class="t" style="left:117.0px;top:604.6px;font-size:14.8px;color:#5e6c7a;font-weight:400;">Work Phone</div>
<div class="t" style="left:280.0px;top:604.4px;font-size:15px;color:#5e6c7a;font-weight:400;">:</div>
<div class="t" style="left:298.3px;top:604.4px;font-size:15px;color:#2c3540;font-weight:400;">--</div>
<div class="t" style="left:117.0px;top:634.5px;font-size:14.8px;color:#5e6c7a;font-weight:400;">Fax</div>
<div class="t" style="left:280.0px;top:634.3px;font-size:15px;color:#5e6c7a;font-weight:400;">:</div>
<div class="t" style="left:298.3px;top:634.3px;font-size:15px;color:#2c3540;font-weight:400;">--</div>
<div class="a" style="left:117px;top:667px;width:358px;height:99px;background:#f0f5fe;border-radius:5px"></div>
<div class="t" style="left:127.0px;top:678.5px;font-size:14.8px;color:#5e6c7a;font-weight:400;">Subscribed to</div>
<div class="t" style="left:258.0px;top:678.3px;font-size:15px;color:#5e6c7a;font-weight:400;">:</div>
<div class="a" style="left:277px;top:679px;width:169px;height:79px;background:radial-gradient(ellipse 75% 65% at 72% 108%,#eff4fd 0%,#e9eef7 35%,rgba(214,220,229,0) 100%),linear-gradient(90deg,#ced4dd,#d5dbe3 30%,#d2d8e0 60%,#d3d8e0 100%)"></div>
<div class="t" style="left:446.0px;top:679.1px;font-size:15px;color:#2c3540;font-weight:400;">,</div>
<div class="a" style="left:117px;top:787px;width:358px;height:2px;background:#e5e9ee"></div>
<div class="t" style="left:117.5px;top:811.3px;font-size:14px;color:#4f5e6d;font-weight:700;">Patient Emergency Contact</div>
<div class="t" style="left:117.0px;top:851.3px;font-size:14.8px;color:#5e6c7a;font-weight:400;">Name</div>
<div class="t" style="left:280.0px;top:851.1px;font-size:15px;color:#5e6c7a;font-weight:400;">:</div>
<div class="t" style="left:298.5px;top:851.1px;font-size:15px;color:#2c3540;font-weight:400;">Mrs --</div>
<div class="a" style="left:507px;top:270px;width:1397px;height:86px;background:#fff;border:1px solid #dae1e8;border-radius:4px;box-sizing:border-box"></div>
<div class="t" style="left:522.0px;top:283.9px;font-size:14px;color:#4f5e6d;font-weight:700;">Action(s) Required</div>
<div class="t" style="left:515.0px;top:319.1px;font-size:14px;color:#d0474c;font-weight:400;">ACCOUNT NEEDS ATTENTION</div>
<div class="a" style="left:725.0px;top:316.5px;width:1px;height:19px;background:#d5dbe3"></div>
<div class="a" style="left:745px;top:314.8px;width:22px;height:22px;border-radius:11px;box-sizing:border-box;border:1.1px solid #d0474c;background:#fdecec;color:#d0474c;font-size:15px;line-height:21px;text-align:right;padding-right:1.5px">6</div>
<div class="t" style="left:772.5px;top:317.7px;font-size:15px;color:#d0474c;font-weight:400;">Document Pending</div>
<div class="a" style="left:918.0px;top:316.5px;width:1px;height:19px;background:#d5dbe3"></div>
<div class="t" style="left:928.5px;top:318.6px;font-size:14.6px;color:#d0474c;font-weight:400;">Med. Hx. Pat. Sign Pending</div>
<div class="a" style="left:1118.0px;top:316.5px;width:1px;height:19px;background:#d5dbe3"></div>
<div class="t" style="left:1129.0px;top:317.5px;font-size:15px;color:#d0474c;font-weight:400;">Recall Overdue 08/24/2023</div>
<div class="a" style="left:1321.0px;top:316.5px;width:1px;height:19px;background:#d5dbe3"></div>
<div class="a" style="left:1333px;top:310px;width:570px;height:30px;overflow:hidden"><div class="t" style="left:0;top:7.9px;font-size:15.5px;color:#d0474c">Next Appt. 03/25/2024</div><div class="t" style="left:159px;top:8.1px;font-size:15.2px;color:#d0474c">HIPAA consent form last completed on 03/21/2023 (1y 0m ago)</div></div>
<div class="a" style="left:1498.0px;top:316.5px;width:1px;height:19px;background:#d5dbe3"></div>
<div class="a" style="left:507px;top:372px;width:1397px;height:143px;background:#fff;border:1px solid #dae1e8;border-radius:4px;box-sizing:border-box"></div>
<div class="a" style="left:508px;top:373px;width:1395px;height:50px;background:#f5f7f9;border-bottom:1px solid #dae1e8;border-radius:3px 3px 0 0"></div>
<div class="t" style="left:522.0px;top:390.4px;font-size:17px;color:#4f5e6d;font-weight:700;">Medical Alerts</div>
<div class="t" style="left:1709.0px;top:390.3px;font-size:15px;color:#2089a0;font-weight:400;">View Medical History Form</div>
<div class="t" style="left:522.0px;top:443.0px;font-size:15px;color:#5e6c7a;font-weight:400;">Conditions</div>
<div class="t" style="left:653.5px;top:443.0px;font-size:15px;color:#5e6c7a;font-weight:400;">:</div>
<div class="t" style="left:522.0px;top:482.2px;font-size:15px;color:#5e6c7a;font-weight:400;">Allergies</div>
<div class="t" style="left:653.5px;top:482.2px;font-size:15px;color:#5e6c7a;font-weight:400;">:</div>
<div class="a" style="left:672px;top:439.3px;width:137.4px;height:21.5px;box-sizing:border-box;border:1.2px solid #8a5ed8;border-radius:11px;background:#f3eefd;color:#7b4fcb;font-size:15px;line-height:19px;text-align:center">Bisphosphonates</div>
<div class="a" style="left:815px;top:439.3px;width:103.4px;height:21.5px;box-sizing:border-box;border:1.2px solid #8a5ed8;border-radius:11px;background:#f3eefd;color:#7b4fcb;font-size:15px;line-height:19px;text-align:center">Emphysema</div>
<div class="a" style="left:924.3px;top:439.3px;width:117.6px;height:21.5px;box-sizing:border-box;border:1.2px solid #8a5ed8;border-radius:11px;background:#f3eefd;color:#7b4fcb;font-size:15px;line-height:19px;text-align:center">Sleeplessness</div>
<div class="a" style="left:672px;top:476.4px;width:174.5px;height:21.5px;box-sizing:border-box;border:1.2px solid #b65b47;border-radius:11px;background:#fcedea"></div>
<svg class="a" style="left:684px;top:481px;" width="11" height="13" viewBox="0 0 11 13"><circle cx="5.5" cy="3" r="2.8" fill="#a8503c"/><path d="M0.5,12.5 C0.5,6.5 10.5,6.5 10.5,12.5 Z" fill="#a8503c"/></svg>
<div class="t" style="left:703.0px;top:479.8px;font-size:15px;color:#a5513e;font-weight:400;">Allergy to Latex/R&hellip;</div>
<div class="a" style="left:506px;top:531.5px;width:1398px;height:69px;background:#eef4fd;border:1px solid #d3e1f5;border-left:4px solid #2d53a1;border-radius:4px 0 0 4px;box-sizing:border-box"></div>
<svg class="a" style="left:522px;top:542.5px;" width="17" height="17" viewBox="0 0 17 17"><circle cx="8.5" cy="8.5" r="8.2" fill="#2d53a1"/><circle cx="9" cy="4.6" r="1.3" fill="#fff"/><path d="M7.2,7.2 H9.9 V12.6 H10.9 V13.6 H7 V12.6 H8 V8.2 H7.2 Z" fill="#fff"/></svg>
<div class="t" style="left:551.0px;top:542.8px;font-size:15px;color:#2c3540;font-weight:400;">Sunbit Financing options are available for this patient.</div>
<div class="t" style="left:911.5px;top:542.8px;font-size:15px;color:#66737f;font-weight:400;">Last Checked on 03/25/2024, 10:32 AM</div>
<svg class="a" style="left:1180px;top:543px;" width="14" height="14" viewBox="0 0 14 14"><circle cx="7" cy="7" r="6.2" fill="none" stroke="#66737f" stroke-width="1.2"/><rect x="6.3" y="6" width="1.4" height="4.5" fill="#66737f"/><circle cx="7" cy="4.2" r="0.8" fill="#66737f"/></svg>
<svg class="a" style="left:551.5px;top:571px;" width="22" height="16.5" viewBox="0 0 22 16.5"><rect x="0" y="0" width="22" height="16.5" fill="#fff"/><rect x="0" y="0" width="0.8" height="16.5" fill="#dfe3e8"/><rect x="21.2" y="0" width="0.8" height="16.5" fill="#dfe3e8"/><polygon fill="#2451a8" points="15.15,8.72 19.56,8.92 18.83,11.67 14.91,9.64"/><polygon fill="#2451a8" points="14.29,10.71 18.00,13.09 15.99,15.10 13.61,11.39"/><polygon fill="#2451a8" points="12.54,12.01 14.57,15.93 11.82,16.66 11.62,12.25"/><polygon fill="#2451a8" points="10.38,12.25 10.18,16.66 7.43,15.93 9.46,12.01"/><polygon fill="#2451a8" points="8.39,11.39 6.01,15.10 4.00,13.09 7.71,10.71"/><polygon fill="#2451a8" points="7.09,9.64 3.17,11.67 2.44,8.92 6.85,8.72"/><polygon fill="#f28c12" points="6.85,7.48 2.44,7.28 3.17,4.53 7.09,6.56"/><polygon fill="#f28c12" points="7.71,5.49 4.00,3.11 6.01,1.10 8.39,4.81"/><polygon fill="#f28c12" points="9.46,4.19 7.43,0.27 10.18,-0.46 10.38,3.95"/><polygon fill="#f28c12" points="11.62,3.95 11.82,-0.46 14.57,0.27 12.54,4.19"/><polygon fill="#f28c12" points="13.61,4.81 15.99,1.10 18.00,3.11 14.29,5.49"/><polygon fill="#f28c12" points="14.91,6.56 18.83,4.53 19.56,7.28 15.15,7.48"/></svg>
<div class="t" style="left:579.5px;top:573.9px;font-size:13.8px;color:#1f2630;font-weight:700;">Sunbit</div>
<div class="t" style="left:633.0px;top:572.9px;font-size:15px;color:#d0474c;font-weight:400;">*</div>
<div class="t" style="left:640.0px;top:572.9px;font-size:15px;color:#2089a0;font-weight:400;">Rates &amp; Terms</div>
<svg class="a" style="left:1657.5px;top:559px;" width="14" height="13" viewBox="0 0 14 13"><path d="M0.5,2.7 L13.2,2 L5.6,11.3 L5,6.4 Z" fill="#2089a0"/><path d="M5,6.4 L12.5,2.4" stroke="#eef4fd" stroke-width="0.9"/></svg>
<div class="t" style="left:1677.0px;top:558.5px;font-size:14.8px;color:#2089a0;font-weight:400;">Send Pre-qualification Link</div>
<svg class="a" style="left:1879px;top:559px;" width="14" height="14" viewBox="0 0 14 14"><path d="M1,1 L13,13 M13,1 L1,13" stroke="#5a6672" stroke-width="1.5"/></svg>
<div class="a" style="left:1904px;top:270px;width:7px;height:330px;background:#95a1ae;border-radius:3px"></div>
<div class="a" style="left:507px;top:616px;width:1397px;height:226px;background:#fff;border:1px solid #dae1e8;border-radius:4px;box-sizing:border-box"></div>
<div class="a" style="left:507px;top:858px;width:1397px;height:12px;background:linear-gradient(#f1f2f4,#dcdee2);border:1px solid #dae1e8;border-bottom:none;border-radius:5px 5px 0 0;box-sizing:border-box"></div>
<div class="a" style="left:99px;top:272px;width:394px;height:615px;border:3px solid #e60000;box-sizing:border-box"></div>
<div class="a" style="left:486px;top:627px;width:1449px;height:204px;background:#fff"></div>
<div class="a" style="left:486px;top:627px;width:1449px;height:37px;background:#f5f7f9;border-bottom:1px solid #e1e6ec;box-sizing:border-box"></div>
<div class="t" style="left:487.5px;top:629.0px;font-size:17.3px;color:#5a6a7a;font-weight:700;">Insurance Information</div>
<svg class="a" style="left:1802px;top:629.5px;" width="15" height="14" viewBox="0 0 15 14"><path d="M6,1.5 H1.5 V12.5 H12.5 V8" fill="none" stroke="#2089a0" stroke-width="1.5"/><path d="M8,0.7 H13.3 V6 M13.3,0.7 L6.5,7.5" fill="none" stroke="#2089a0" stroke-width="1.5"/></svg>
<div class="t" style="left:1822.0px;top:628.5px;font-size:15.6px;color:#2089a0;font-weight:400;">All Insurances</div>
<div class="a" style="left:488px;top:680px;width:1440px;height:152px;border:1px solid #e0e5eb;border-radius:4px;box-sizing:border-box;background:#fff"></div>
<div class="a" style="left:488px;top:680px;width:1440px;height:44px;background:#eaedf1;border-radius:4px 4px 0 0;border-bottom:1px solid #e0e5eb;box-sizing:border-box"></div>
<div class="a" style="left:488px;top:788px;width:1440px;height:1px;background:#e3e8ee"></div>
<div class="a" style="left:728px;top:680px;width:1px;height:152px;background:#e0e5eb"></div>
<div class="a" style="left:968px;top:680px;width:1px;height:152px;background:#e0e5eb"></div>
<div class="a" style="left:1208px;top:680px;width:1px;height:152px;background:#e0e5eb"></div>
<div class="a" style="left:1448px;top:680px;width:1px;height:152px;background:#e0e5eb"></div>
<div class="a" style="left:1688px;top:680px;width:1px;height:152px;background:#e0e5eb"></div>
<div class="t" style="left:498.3px;top:694.4px;font-size:15.2px;color:#3b4a58;font-weight:700;">Hierarchy</div>
<div class="t" style="left:738.5px;top:694.4px;font-size:15.2px;color:#3b4a58;font-weight:700;">Carrier Name</div>
<div class="t" style="left:979.0px;top:694.4px;font-size:15.2px;color:#3b4a58;font-weight:700;">Plan Name</div>
<div class="t" style="left:1218.5px;top:694.4px;font-size:15.2px;color:#3b4a58;font-weight:700;">Plan Type</div>
<div class="t" style="left:1458.5px;top:694.4px;font-size:15.2px;color:#3b4a58;font-weight:700;">Activation Period</div>
<div class="t" style="left:1698.5px;top:694.4px;font-size:15.2px;color:#3b4a58;font-weight:700;">Eligibility Status</div>
<div class="t" style="left:498.5px;top:747.9px;font-size:15.5px;color:#363f4a;font-weight:400;">Primary Dental</div>
<div class="t" style="left:738.5px;top:747.9px;font-size:15.5px;color:#363f4a;font-weight:400;">Delta Dental Of MN</div>
<div class="t" style="left:979.0px;top:737.9px;font-size:15.5px;color:#363f4a;font-weight:400;">Premier/PPO 100/80/50 (Grp.</div>
<div class="t" style="left:979.0px;top:758.2px;font-size:15.5px;color:#363f4a;font-weight:400;">No: 072477)</div>
<div class="t" style="left:1218.5px;top:747.9px;font-size:15.5px;color:#363f4a;font-weight:400;">HMO</div>
<div class="t" style="left:1458.5px;top:748.0px;font-size:16px;color:#363f4a;font-weight:400;">01/01/2022 - Indefinite</div>
<div class="t" style="left:1698.5px;top:748.4px;font-size:15.5px;color:#7d8893;font-weight:400;">Updated on</div>
<div class="t" style="left:1790.5px;top:748.4px;font-size:15.5px;color:#7d8893;font-weight:400;">:</div>
<div class="t" style="left:1810.5px;top:747.5px;font-size:16.5px;color:#3a9a58;font-weight:400;">01/24/2023</div>
<div class="t" style="left:498.5px;top:801.7px;font-size:15.5px;color:#363f4a;font-weight:400;">Secondary Dental</div>
<div class="t" style="left:738.5px;top:801.7px;font-size:15.5px;color:#363f4a;font-weight:400;">sasi</div>
<div class="t" style="left:979.0px;top:801.9px;font-size:15.2px;color:#363f4a;font-weight:400;">NYNA_PPO (Grp. No: 072477)</div>
<div class="t" style="left:1218.5px;top:801.7px;font-size:15.5px;color:#363f4a;font-weight:400;">PPO</div>
<div class="t" style="left:1458.5px;top:800.9px;font-size:16px;color:#363f4a;font-weight:400;">01/01/2022 - Indefinite</div>
<div class="t" style="left:1698.5px;top:801.3px;font-size:15.5px;color:#7d8893;font-weight:400;">Updated on</div>
<div class="t" style="left:1790.5px;top:801.3px;font-size:15.5px;color:#7d8893;font-weight:400;">:</div>
<div class="t" style="left:1810.5px;top:800.4px;font-size:16.5px;color:#3a9a58;font-weight:400;">01/24/2023</div>
<div class="a" style="left:50px;top:56px;width:1115px;height:140px;border:3px solid #e60000;box-sizing:border-box"></div>
<div class="a" style="left:483px;top:624px;width:1455px;height:210px;border:3px solid #e60000;box-sizing:border-box"></div>
<div class="a" style="left:0;top:0;width:1944px;height:6px;background:#44b876"></div>
<div class="a" style="left:0;top:887px;width:1944px;height:6px;background:#44b876"></div>
<div class="a" style="left:0;top:0;width:6px;height:893px;background:#44b876"></div>
<div class="a" style="left:1938px;top:0;width:6px;height:893px;background:#44b876"></div>
</body></html>
